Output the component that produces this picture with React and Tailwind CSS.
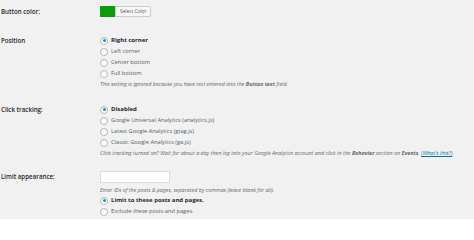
import React from "react";

const font = { fontFamily: '"Open Sans", "Noto Sans", sans-serif' };

function Radio({ checked, bold, children }) {
  return (
    <div className="flex h-[11px] items-center">
      <span className="flex h-[8px] w-[8px] shrink-0 items-center justify-center rounded-full border border-[#b4b9be] bg-white shadow-[inset_0_1px_1px_rgba(0,0,0,0.08)]">
        {checked && <span className="h-[3px] w-[3px] rounded-full bg-[#1e8cbe]" />}
      </span>
      <span className={"ml-[3px] " + (bold ? "text-[6px] font-bold text-[#23282d]" : "text-[5.7px] text-[#555d66]")}>
        {children}
      </span>
    </div>
  );
}

function Note({ children }) {
  return <div className="flex h-[10px] items-center whitespace-pre text-[5.4px] italic text-[#666]">{children}</div>;
}

function Row({ label, className, children }) {
  return (
    <div className={"flex " + (className || "")}>
      <div className="w-[100px] shrink-0 pl-[1px] text-[6.2px] font-semibold text-[#23282d]">
        <div className="flex h-[11px] items-center">{label}</div>
      </div>
      <div className="flex-1">{children}</div>
    </div>
  );
}

export default function App() {
  return (
    <div className="h-[219px] w-[474px] overflow-hidden bg-[#f1f1f1] pt-[6px]" style={font}>
      <Row label="Button color:">
        <div className="flex h-[11px] items-center">
          <span className="h-[11px] w-[15px] bg-[#0a9c0a]" />
          <span className="flex h-[11px] items-center rounded-r-[2px] border border-[#ccc] bg-[#f7f7f7] px-[4px] text-[4.8px] text-[#555]">
            Select Color
          </span>
        </div>
      </Row>

      <Row label="Position" className="mt-[18px]">
        <Radio checked bold>Right corner</Radio>
        <Radio>Left corner</Radio>
        <Radio>Center bottom</Radio>
        <Radio>Full bottom</Radio>
        <Note>
          {"This setting is ignored because you have text entered into the "}
          <b>Button text</b>
          {" field."}
        </Note>
      </Row>

      <Row label="Click tracking:" className="mt-[15px]">
        <Radio checked bold>Disabled</Radio>
        <Radio>Google Universal Analytics (analytics.js)</Radio>
        <Radio>Latest Google Analytics (gtag.js)</Radio>
        <Radio>Classic Google Analytics (ga.js)</Radio>
        <Note>
          {"Click tracking turned on? Wait for about a day then log into your Google Analytics account and click in the "}
          <b>Behavior</b>
          {" section on "}
          <b>Events</b>
          {". "}
          <span className="text-[#0073aa] underline">(What's this?)</span>
        </Note>
      </Row>

      <Row label="Limit appearance:" className="mt-[13px]">
        <div className="h-[12px] w-[70px] border border-[#ddd] bg-white" />
        <div className="mt-[2px]">
          <Note>Enter IDs of the posts &amp; pages, separated by commas (leave blank for all).</Note>
        </div>
        <Radio checked bold>Limit to these posts and pages.</Radio>
        <Radio>Exclude these posts and pages.</Radio>
      </Row>
    </div>
  );
}
